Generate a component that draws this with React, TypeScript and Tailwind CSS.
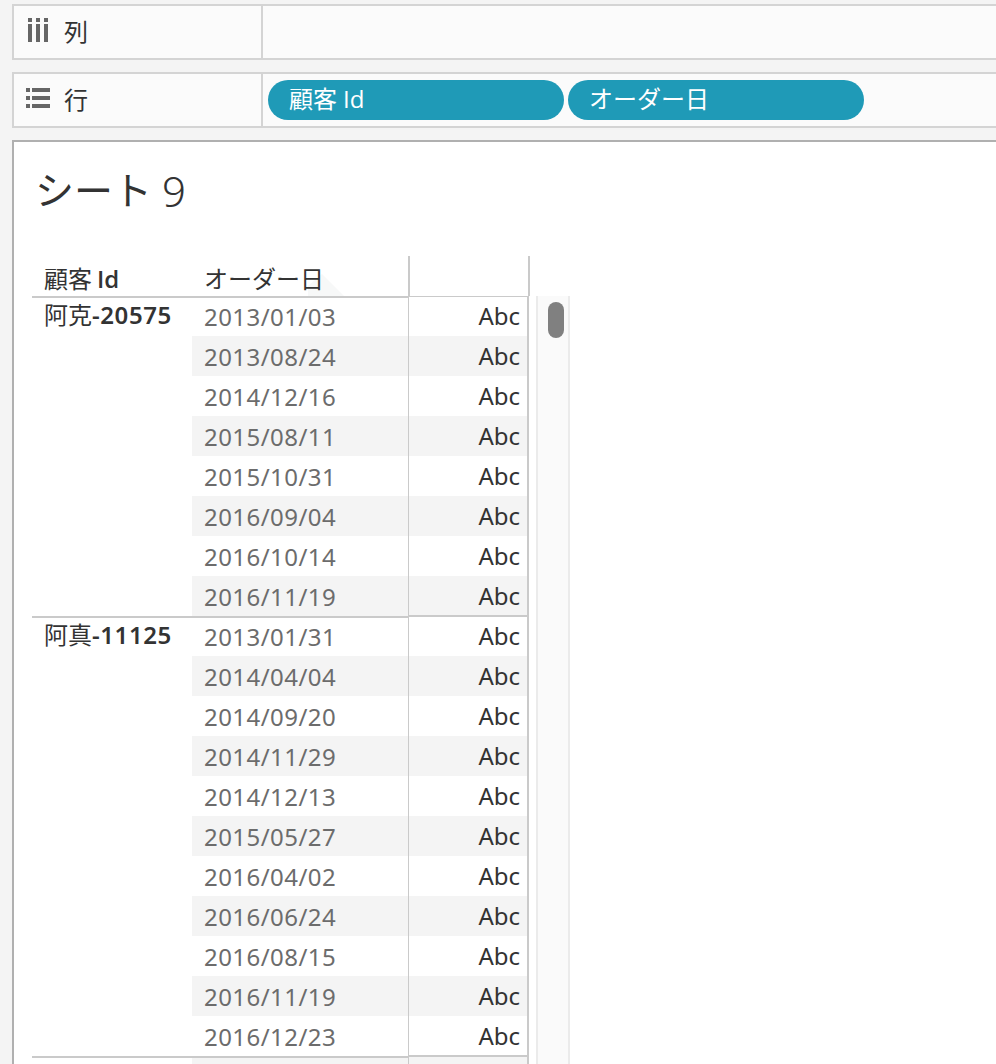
import type { ReactNode } from "react";

const groups = [
  {
    id: "阿克",
    num: "-20575",
    dates: ["2013/01/03", "2013/08/24", "2014/12/16", "2015/08/11", "2015/10/31", "2016/09/04", "2016/10/14", "2016/11/19"],
  },
  {
    id: "阿真",
    num: "-11125",
    dates: ["2013/01/31", "2014/04/04", "2014/09/20", "2014/11/29", "2014/12/13", "2015/05/27", "2016/04/02", "2016/06/24", "2016/08/15", "2016/11/19", "2016/12/23"],
  },
];

const jp = "font-['Noto_Sans_CJK_JP',sans-serif]";

function ColumnsIcon() {
  return (
    <svg width="24" height="24" viewBox="0 0 24 24" fill="#666" shapeRendering="crispEdges">
      {[2, 10, 18].map((x) => (
        <g key={x}>
          <rect x={x} y="0" width="4" height="4" />
          <rect x={x} y="6" width="4" height="18" />
        </g>
      ))}
    </svg>
  );
}

function RowsIcon() {
  return (
    <svg width="24" height="24" viewBox="0 0 24 24" fill="#666" shapeRendering="crispEdges">
      {[2, 10, 18].map((y) => (
        <g key={y}>
          <rect x="0" y={y} width="4" height="4" />
          <rect x="6" y={y} width="18" height="4" />
        </g>
      ))}
    </svg>
  );
}

function Shelf({ icon, label, children }: { icon: ReactNode; label: string; children?: ReactNode }) {
  return (
    <div className="flex h-14 border-2 border-r-0 border-[#d4d4d4] bg-[#fbfbfb]">
      <div className="flex w-[249px] items-start gap-[14px] border-r-2 border-[#d4d4d4] pl-3 pt-3">
        {icon}
        <span className="text-[24px] leading-[25px] text-[#333]">{label}</span>
      </div>
      <div className="flex items-center gap-1 pl-[5px]">{children}</div>
    </div>
  );
}

function Pill({ children }: { children: ReactNode }) {
  return (
    <div className="flex h-10 w-[296px] items-start rounded-full bg-[#1f9ab7] pl-[21px] text-[24px] leading-[36px] text-white">
      {children}
    </div>
  );
}

export default function App() {
  return (
    <div className={`flex h-[1064px] w-[996px] flex-col overflow-hidden bg-[#f4f4f4] pl-3 pt-1 text-[#333] ${jp}`}>
      <div className="flex flex-col gap-3">
        <Shelf icon={<ColumnsIcon />} label="列" />
        <Shelf icon={<RowsIcon />} label="行">
          <Pill>
            <span>顧客</span>
            <span className="ml-[6px] font-['Open_Sans'] font-normal leading-[37px]">Id</span>
          </Pill>
          <Pill>オーダー日</Pill>
        </Shelf>
      </div>

      <div className="mt-3 flex h-[924px] shrink-0 flex-col border-l-2 border-t-2 border-[#b0b0b0] bg-white pl-[18px]">
        <h1 className="flex h-[114px] items-start pl-[3px] pt-[24px] font-normal leading-[50px]">
          <span className="text-[39px] leading-[45px]">シート</span>
          <span className="ml-[10px] font-['Noto_Sans'] text-[42px] font-light">9</span>
        </h1>

        <div className="flex h-10 shrink-0">
          <div className="w-40 pl-3 pt-[2px] text-[24px] leading-10">
            顧客<span className="ml-[5px] font-['Open_Sans'] font-semibold">Id</span>
          </div>
          <div className="relative w-[216px] pl-3 pt-[2px] text-[24px] leading-10">
            <svg className="absolute left-[116px] top-[18px]" width="38" height="22" viewBox="0 0 38 22">
              <path d="M14 0L36 22H0V12z" fill="#f7f8f8" />
            </svg>
            <span className="relative">オーダー日</span>
          </div>
          <div className="w-[122px] border-x-2 border-[#cacaca]" />
        </div>

        <div className="flex h-[768px] overflow-hidden">
          <div className="w-[376px]">
            {groups.map((g) => (
              <div key={g.id} className="relative flex">
                <div className="w-40 pl-3 text-[24px] leading-[36px]">
                  {g.id}
                  <span className="font-['Noto_Sans'] font-semibold tracking-[0.6px]">{g.num}</span>
                </div>
                <div className="w-[216px] font-['Noto_Sans'] text-[24px] font-normal tracking-[0.45px] text-[#6c6c6c]">
                  {g.dates.map((d, i) => (
                    <div key={d} className={`h-10 pl-3 leading-[42px] ${i % 2 ? "bg-[#f4f4f4]" : "bg-white"}`}>
                      {d}
                    </div>
                  ))}
                </div>
                <div className="absolute inset-x-0 top-0 h-[2px] bg-[#cacaca]" />
              </div>
            ))}
            <div className="flex h-10 border-t-2 border-[#cacaca]">
              <div className="w-40 pl-3 text-[24px] leading-[34px]">阿克</div>
              <div className="h-10 w-[216px] bg-[#f4f4f4]" />
            </div>
          </div>
          <div className="flex h-[768px] w-[121px] flex-col border-l border-r-2 border-t border-[#cacaca] font-['Noto_Sans'] text-[24px] font-normal">
            {groups.map((g) => (
              <div key={g.id} className="shrink-0 border-b-2 border-[#cacaca]">
                {g.dates.map((d, i) => (
                  <div
                    key={d}
                    className={`pr-[7px] text-right ${i === 0 ? "h-[39px] leading-[38px]" : i === g.dates.length - 1 ? "h-[39px] leading-10" : "h-10 leading-10"} ${i % 2 ? "bg-[#f4f4f4]" : "bg-white"}`}
                  >
                    Abc
                  </div>
                ))}
              </div>
            ))}
            <div className="h-10 shrink-0 bg-[#f4f4f4]" />
          </div>
          <div className="ml-[7px] flex w-[34px] justify-center border-l-2 border-r-2 border-[#ebebeb] bg-[#fafafa] pl-[2px] pt-[6px]">
            <div className="ml-[4px] h-9 w-4 shrink-0 rounded-full bg-[#808080]" />
          </div>
        </div>
      </div>
    </div>
  );
}
